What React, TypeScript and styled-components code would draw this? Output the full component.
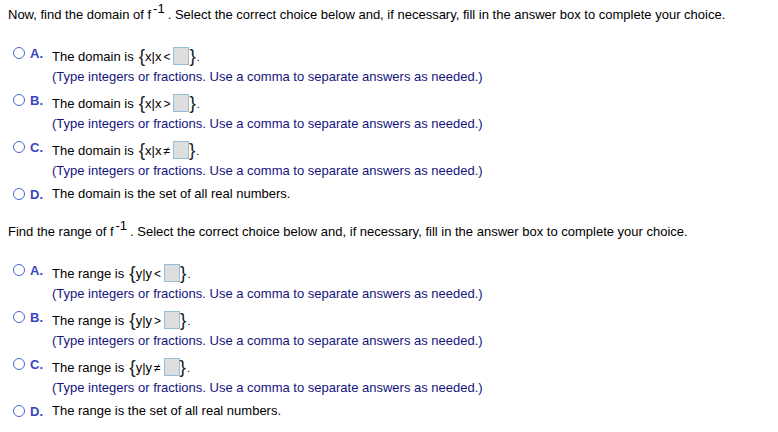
import React from 'react'
import styled, { createGlobalStyle } from 'styled-components'

const GlobalStyle = createGlobalStyle`
  html, body {
    margin: 0;
    padding: 0;
    background: #ffffff;
  }
  body {
    font-family: "Liberation Sans", Arial, sans-serif;
    font-size: 13px;
    color: #000000;
  }
`

const StyledPage = styled('main')`
  padding: 7px 8px;
  width: 778px;
  box-sizing: border-box;
`

const StyledPrompt = styled('p') <{ gapTop: number }>`
  margin: ${p => p.gapTop}px 0 0 0;
  line-height: 16px;
  height: 16px;
  white-space: nowrap;
`

const StyledSup = styled('sup')`
  font-size: 13px;
  line-height: 0;
  position: relative;
  top: -1px;
  margin-left: 2px;
  margin-right: 3px;
`

const StyledChoiceList = styled('ul')<{ gapTop: number }>`
  list-style: none;
  margin: ${p => p.gapTop}px 0 0 0;
  padding: 0;
  display: flex;
  flex-direction: column;
  gap: 7px;
`

const StyledChoice = styled('li')`
  display: flex;
  align-items: flex-start;
`

const StyledMarker = styled('div')`
  display: flex;
  align-items: center;
  height: 12px;
  margin-top: 2px;
  padding-left: 5px;
  width: 39px;
  flex-shrink: 0;
`

const StyledRadio = styled('span')`
  width: 10px;
  height: 10px;
  border: 1.3px solid #4a64d2;
  border-radius: 50%;
  box-sizing: content-box;
  flex-shrink: 0;
`

const StyledLetter = styled('span')`
  margin-left: 5px;
  font-weight: bold;
  color: #3a46c0;
  font-size: 13px;
`

const StyledBody = styled('div')`
  display: flex;
  flex-direction: column;
`

const StyledMainLine = styled('div')<{ tall: boolean }>`
  display: flex;
  align-items: flex-end;
  height: ${p => (p.tall ? 20 : 16)}px;
  line-height: 16px;
  white-space: nowrap;
`

const StyledHint = styled('div')`
  margin-top: 4px;
  line-height: 16px;
  height: 16px;
  color: #14147e;
  white-space: nowrap;
`

const StyledSet = styled('span')`
  display: inline-flex;
  align-items: flex-end;
  margin-left: 5px;
  height: 20px;
`

const StyledBrace = styled('span')`
  font-family: "Liberation Sans", sans-serif;
  font-size: 19px;
  line-height: 19px;
  color: #222;
  align-self: center;
`

const StyledMath = styled('span')`
  font-size: 13px;
  line-height: 16px;
`

const StyledOp = styled('span')`
  font-size: 12px;
  line-height: 16px;
  margin: 0 2px 0 2px;
`

const StyledBox = styled('span')`
  display: inline-block;
  width: 14px;
  height: 16px;
  background: #dedede;
  border: 1px solid #8fbfdc;
  margin-left: 1px;
`

const StyledDot = styled('span')`
  margin-left: 1px;
  font-size: 11px;
  line-height: 16px;
`

const hint = '(Type integers or fractions. Use a comma to separate answers as needed.)'

interface ChoiceState {
  letter: string
  label: string
  variable?: string
  op?: string
}

const SetNotation = ({ variable, op }: { variable: string; op: string }) => (
  <StyledSet>
    <StyledBrace>{'{'}</StyledBrace>
    <StyledMath>{variable}|{variable}</StyledMath>
    <StyledOp>{op}</StyledOp>
    <StyledBox />
    <StyledBrace>{'}'}</StyledBrace>
    <StyledDot>.</StyledDot>
  </StyledSet>
)

const Choice = ({ letter, label, variable, op }: ChoiceState) => {
  const tall = !!op
  return (
    <StyledChoice>
      <StyledMarker>
        <StyledRadio />
        <StyledLetter>{letter}.</StyledLetter>
      </StyledMarker>
      <StyledBody>
        <StyledMainLine tall={tall}>
          {label}
          {op && variable && <SetNotation variable={variable} op={op} />}
        </StyledMainLine>
        {tall && <StyledHint>{hint}</StyledHint>}
      </StyledBody>
    </StyledChoice>
  )
}

const buildChoices = (noun: string, variable: string): ChoiceState[] => [
  { letter: 'A', label: `The ${noun} is`, variable, op: '<' },
  { letter: 'B', label: `The ${noun} is`, variable, op: '>' },
  { letter: 'C', label: `The ${noun} is`, variable, op: '≠' },
  { letter: 'D', label: `The ${noun} is the set of all real numbers.` },
]

const tail = 'Select the correct choice below and, if necessary, fill in the answer box to complete your choice.'

const App = () => {
  return (
    <>
      <GlobalStyle />
      <StyledPage>
        <StyledPrompt gapTop={0}>
          Now, find the domain of f<StyledSup>-1</StyledSup>. {tail}
        </StyledPrompt>
        <StyledChoiceList gapTop={22}>
          {buildChoices('domain', 'x').map(c => <Choice key={c.letter} {...c} />)}
        </StyledChoiceList>
        <StyledPrompt gapTop={22}>
          Find the range of f<StyledSup>-1</StyledSup>. {tail}
        </StyledPrompt>
        <StyledChoiceList gapTop={22}>
          {buildChoices('range', 'y').map(c => <Choice key={c.letter} {...c} />)}
        </StyledChoiceList>
      </StyledPage>
    </>
  )
}

export default App
